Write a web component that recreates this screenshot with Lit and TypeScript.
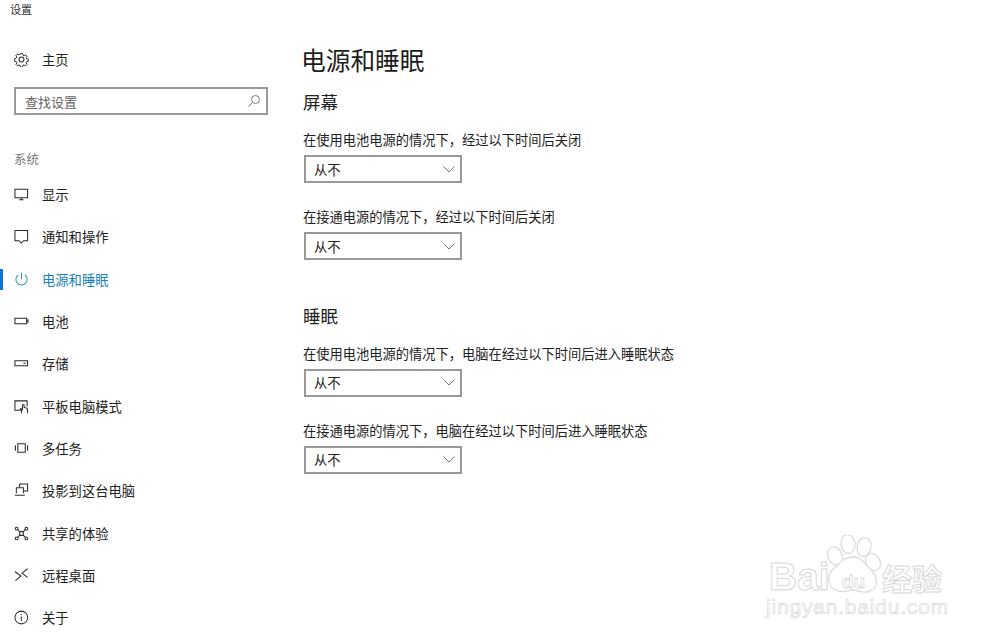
import { LitElement, html, css, svg } from "lit";
import { customElement } from "lit/decorators.js";

const icons: Record<string, unknown> = {
  home: svg`<circle cx="8" cy="8" r="2.6"/><path d="M6.8 1h2.4l.4 2 1.3.6 1.8-1.1 1.7 1.7-1.1 1.8.6 1.3 2 .4v2.4l-2 .4-.6 1.3 1.1 1.8-1.7 1.7-1.8-1.1-1.3.6-.4 2H6.8l-.4-2-1.3-.6-1.8 1.1-1.7-1.7 1.1-1.8-.6-1.3-2-.4V6.8l2-.4.6-1.3-1.1-1.8 1.7-1.7 1.8 1.1 1.3-.6z" transform="translate(.6 .6) scale(.925)"/>`,
  display: svg`<path d="M1 2.500h13.500v9H1zM7.800 11.500v2M5.500 13.500h4.600"/>`,
  notify: svg`<path d="M1 1.500h13.500v11h-4.300L7.800 15 5.400 12.500H1z"/>`,
  power: svg`<path d="M8 .800v7M4.600 3a6 6 0 1 0 6.800 0"/>`,
  battery: svg`<path d="M1 4.500h12.500v6H1zM13.500 6.500h1.500v2h-1.500z"/>`,
  storage: svg`<path d="M1 5h13.500v5.500H1zM10 7.800h2.500"/>`,
  tablet: svg`<path d="M7 12H1V2h13v6"/><path d="M8 15.300v-3L6.600 10.800l.8-.6L9 11.300V6.800a.9.9 0 0 1 1.800 0V9l3 .8.500 1v4.500"/>`,
  multi: svg`<path d="M4 3h8v9H4zM1.500 4.500v6M14.500 4.500v6"/>`,
  project: svg`<path d="M6 4.500V1h8.500v7.500H10.500"/><path d="M2.500 11V5h7.500v6M1 13h10.500"/>`,
  share: svg`<circle cx="2.800" cy="2.800" r="1.500"/><circle cx="13.200" cy="2.800" r="1.500"/><circle cx="2.800" cy="13.200" r="1.500"/><circle cx="13.200" cy="13.200" r="1.500"/><path d="M6 6h4v4H6zM3.900 3.900L6 6M12.100 3.900L10 6M3.900 12.100L6 10M12.100 12.100L10 10"/>`,
  remote: svg`<path d="M1 4l6.500 4.500L1.500 13.500M14.500 .800L8.500 5.500l6 4.500"/>`,
  about: svg`<circle cx="7.800" cy="8" r="6.800"/><path d="M7.800 7v4.500M7.800 4.300v1.300"/>`,
};

const nav = [
  ["display", "显示"],
  ["notify", "通知和操作"],
  ["power", "电源和睡眠"],
  ["battery", "电池"],
  ["storage", "存储"],
  ["tablet", "平板电脑模式"],
  ["multi", "多任务"],
  ["project", "投影到这台电脑"],
  ["share", "共享的体验"],
  ["remote", "远程桌面"],
  ["about", "关于"],
];

const sections = [
  { title: "屏幕", items: ["在使用电池电源的情况下，经过以下时间后关闭", "在接通电源的情况下，经过以下时间后关闭"] },
  { title: "睡眠", items: ["在使用电池电源的情况下，电脑在经过以下时间后进入睡眠状态", "在接通电源的情况下，电脑在经过以下时间后进入睡眠状态"] },
];

@customElement("app-root")
export class AppRoot extends LitElement {
  static styles = css`
    :host {
      display: block;
      position: relative;
      width: 1000px;
      height: 643px;
      overflow: hidden;
      background: #fff;
      color: #222;
      font-family: "Noto Sans CJK SC", "Liberation Sans", sans-serif;
    }
    .layout { display: flex; height: 643px; }
    .side { width: 290px; flex: none; display: flex; flex-direction: column; }
    .app-title { font-size: 11px; line-height: 14px; padding: 2px 0 0 10px; color: #333; height: 15px; }
    .home { display: flex; align-items: center; height: 20px; margin-top: 32px; padding-left: 14px; font-size: 13.300px; }
    svg.icon { width: 15px; height: 15px; flex: none; fill: none; stroke: #2b2b2b; stroke-width: 1.100; }
    .label { margin-left: 13px; }
    .search {
      box-sizing: border-box; margin: 18px 0 0 14px; width: 254px; height: 28px;
      border: 2px solid #999; display: flex; align-items: center; justify-content: space-between;
      padding: 0 5px 0 9px; font-size: 13px; color: #666;
    }
    .search svg { width: 14px; height: 14px; fill: none; stroke: #777; stroke-width: 1; }
    .group { font-size: 12.500px; color: #777; margin: 35px 0 0 14px; line-height: 18px; height: 18px; }
    .nav { display: flex; flex-direction: column; margin-top: 5.500px; }
    .item { position: relative; display: flex; align-items: center; height: 42.300px; padding-left: 14px; font-size: 13.300px; color: #222; }
    .item.active { color: #1a7fb8; }
    .item.active svg { stroke: #3a8fc0; }
    .item.active::before {
      content: ""; position: absolute; left: 0; top: 11px; width: 3px; height: 21px; background: #0a78d4;
    }
    .main { display: flex; flex-direction: column; padding: 0 0 0 13px; }
    h1 { font-size: 24.700px; font-weight: 400; margin: 41px 0 0 -2px; line-height: 36px; color: #1c1c1c; }
    section { display: flex; flex-direction: column; align-items: flex-start; }
    h2 { font-size: 17.500px; font-weight: 400; margin: 0; line-height: 24px; color: #222; }
    .s1 { margin-top: 13px; }
    .s2 { margin-top: 43.500px; }
    .field-label { font-size: 13.250px; line-height: 20px; color: #222; }
    h2 + .field { margin-top: 16px; }
    .field { display: flex; flex-direction: column; align-items: flex-start; }
    .field + .field { margin-top: 24px; }
    .select {
      box-sizing: border-box; margin: 5px 0 0 1px; width: 158px; height: 28px;
      border: 2px solid #999; display: flex; align-items: center; justify-content: space-between;
      padding: 0 5px 0 8px; font-size: 13.300px; color: #222;
    }
    .select svg { width: 12px; height: 7px; fill: none; stroke: #777; stroke-width: 1; }
    .mark { position: absolute; left: 766px; top: 535px; width: 190px; height: 90px; color: #fff; pointer-events: none; }
    .paw { position: absolute; left: 0; top: 0; width: 190px; height: 70px; fill: #fff; stroke: #dcdcdc; stroke-width: 1.300; }
    .bai, .du, .jy, .url { position: absolute; -webkit-text-stroke: 1px #d8d8d8; white-space: nowrap; }
    .bai { left: 3px; top: 26px; font: 700 39px/31px "Liberation Sans", sans-serif; }
    .du { left: 76px; top: 37px; font: 700 19px/19px "Liberation Sans", sans-serif; -webkit-text-stroke: .8px #d8d8d8; }
    .jy { left: 116px; top: 27px; font-family: "Noto Sans CJK SC", sans-serif; font-size: 30px; line-height: 30px; font-weight: 700; }
    .url { left: 0; top: 61px; font: 400 21px/21px "Liberation Sans", sans-serif; letter-spacing: .800px; -webkit-text-stroke: .7px #d8d8d8; }
  `;

  private chevron() {
    return html`<svg viewBox="0 0 12 7"><path d="M.5.500L6 6l5.500-5.500" /></svg>`;
  }

  render() {
    return html`
      <div class="layout">
        <aside class="side">
          <div class="app-title">设置</div>
          <div class="home"><svg class="icon" viewBox="0 0 16 16">${icons.home}</svg><span class="label">主页</span></div>
          <div class="search">
            <span>查找设置</span>
            <svg viewBox="0 0 14 14"><circle cx="8.500" cy="5.500" r="4"/><path d="M5.500 8.500L1.500 12.500"/></svg>
          </div>
          <div class="group">系统</div>
          <nav class="nav">
            ${nav.map(
              ([icon, label]) => html`<div class="item ${icon === "power" ? "active" : ""}">
                <svg class="icon" viewBox="0 0 16 16">${icons[icon]}</svg><span class="label">${label}</span>
              </div>`
            )}
          </nav>
        </aside>
        <main class="main">
          <h1>电源和睡眠</h1>
          ${sections.map(
            (s, i) => html`<section class="${i === 0 ? "s1" : "s2"}">
              <h2>${s.title}</h2>
              ${s.items.map(
                (t) => html`<div class="field">
                  <div class="field-label">${t}</div>
                  <div class="select"><span>从不</span>${this.chevron()}</div>
                </div>`
              )}
            </section>`
          )}
        </main>
      </div>
      <div class="mark">
        <svg class="paw" viewBox="0 0 190 70">
          <ellipse cx="69" cy="21" rx="7" ry="9.500" transform="rotate(-25 69 21)"/>
          <ellipse cx="82" cy="9" rx="7" ry="9.500" transform="rotate(-5 82 9)"/>
          <ellipse cx="98" cy="12" rx="7" ry="9.500" transform="rotate(10 98 12)"/>
          <ellipse cx="107" cy="27" rx="7" ry="9" transform="rotate(-30 107 27)"/>
          <path d="M88 22c7 0 10 6 16 12 9 8 9 21-3 23-7 1-10-2-14-2-5 0-9 3-15 1-11-3-12-15-5-22 8-6 10-12 21-12z"/>
        </svg>
        <span class="bai">Bai</span><span class="du">du</span><span class="jy">经验</span>
        <span class="url">jingyan.baidu.com</span>
      </div>
    `;
  }
}
